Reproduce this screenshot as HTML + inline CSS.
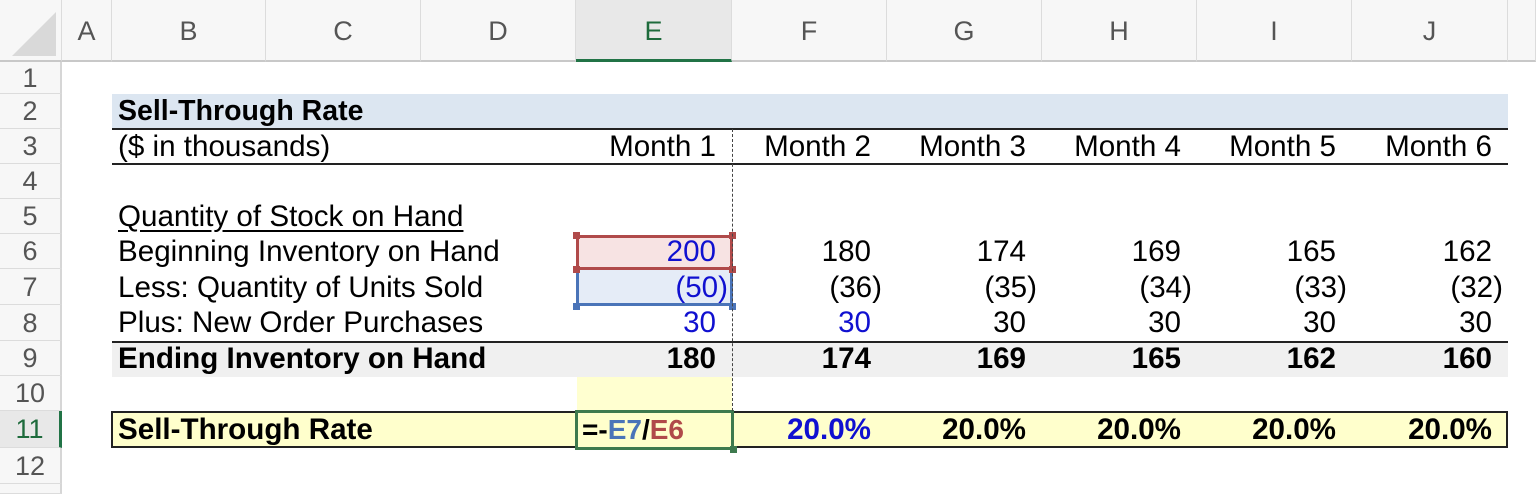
<!DOCTYPE html>
<html><head><meta charset="utf-8"><style>
*{margin:0;padding:0;box-sizing:border-box}
body{width:1536px;height:488px;overflow:hidden;background:#fff;position:relative;font-family:"Liberation Sans",Arial,sans-serif;color:#000}
.a{position:absolute}
.ch{position:absolute;top:0;height:62px;background:#f7f7f7;border-right:1px solid #dcdcdc;border-bottom:2px solid #c8c8c8;color:#555;font-size:27px;line-height:62px;text-align:center}
.rh{position:absolute;left:0;width:62px;background:#f7f7f7;border-right:2px solid #d6d6d6;border-bottom:1px solid #dcdcdc;color:#555;font-size:27px;text-align:center}
.t{position:absolute;font-size:29.6px;white-space:nowrap;line-height:35px}
.r{text-align:right}
.b{font-weight:bold}
.bl{color:#1010d0}
</style></head><body>
<div class="a" style="left:0;top:0;width:62px;height:62px;background:#f7f7f7;border-right:1px solid #dcdcdc;border-bottom:2px solid #c8c8c8"></div>
<svg class="a" style="left:8px;top:8px" width="50" height="50"><polygon points="48,4 48,48 4,48" fill="#d9d9d9"/></svg>
<div class="ch" style="left:62px;width:50px">A</div>
<div class="ch" style="left:112px;width:154px">B</div>
<div class="ch" style="left:266px;width:155px">C</div>
<div class="ch" style="left:421px;width:155px">D</div>
<div class="ch" style="left:576px;width:156px;color:#1e6b3c;background:#e8e8e8;border-bottom:3px solid #217346">E</div>
<div class="ch" style="left:732px;width:155px">F</div>
<div class="ch" style="left:887px;width:155px">G</div>
<div class="ch" style="left:1042px;width:155px">H</div>
<div class="ch" style="left:1197px;width:155px">I</div>
<div class="ch" style="left:1352px;width:156px">J</div>
<div class="ch" style="left:1508px;width:28px"></div>
<div class="rh" style="top:62px;height:32px;line-height:32px">1</div>
<div class="rh" style="top:94px;height:35px;line-height:35px">2</div>
<div class="rh" style="top:129px;height:35px;line-height:35px">3</div>
<div class="rh" style="top:164px;height:35px;line-height:35px">4</div>
<div class="rh" style="top:199px;height:35px;line-height:35px">5</div>
<div class="rh" style="top:234px;height:35px;line-height:35px">6</div>
<div class="rh" style="top:269px;height:36px;line-height:36px">7</div>
<div class="rh" style="top:305px;height:36px;line-height:36px">8</div>
<div class="rh" style="top:341px;height:35px;line-height:35px">9</div>
<div class="rh" style="top:376px;height:35px;line-height:35px">10</div>
<div class="rh" style="top:411px;height:37px;line-height:37px;color:#1e6b3c;background:#e8e8e8;border-right:3px solid #217346">11</div>
<div class="rh" style="top:448px;height:36px;line-height:36px">12</div>
<div class="rh" style="top:484px;height:10px"></div>

<div class="a" style="left:112px;top:94px;width:1396px;height:35px;background:#dce6f1"></div>
<div class="a" style="left:112px;top:128px;width:1396px;height:2px;background:#222"></div>
<div class="a" style="left:112px;top:163px;width:1396px;height:2px;background:#222"></div>
<div class="a" style="left:112px;top:341px;width:1396px;height:36px;background:#f0f0f0;border-top:2px solid #222"></div>
<div class="a" style="left:577px;top:377px;width:155px;height:34px;background:#ffffd0"></div>
<div class="a" style="left:111px;top:411px;width:1397px;height:37px;background:#ffffcc;border:2px solid #222"></div>
<div class="a" style="left:576px;top:235px;width:157px;height:35px;background:#f7e3e3;border:3px solid #b04a4a"></div>
<div class="a" style="left:576px;top:270px;width:157px;height:36px;background:#e5ecf7;border-left:3px solid #4a74b8;border-right:3px solid #4a74b8;border-bottom:3px solid #4a74b8"></div>
<div class="a" style="left:573px;top:232px;width:7px;height:7px;background:#b04a4a"></div>
<div class="a" style="left:729px;top:232px;width:7px;height:7px;background:#b04a4a"></div>
<div class="a" style="left:573px;top:266px;width:7px;height:7px;background:#b04a4a"></div>
<div class="a" style="left:729px;top:266px;width:7px;height:7px;background:#b04a4a"></div>
<div class="a" style="left:573px;top:303px;width:7px;height:7px;background:#4a74b8"></div>
<div class="a" style="left:729px;top:303px;width:7px;height:7px;background:#4a74b8"></div>
<div class="a" style="left:575px;top:410px;width:159px;height:40px;background:#ffffcc;border:3px solid #3e7a4e"></div>
<div class="a" style="left:730px;top:446px;width:7px;height:7px;background:#3e7a4e"></div>
<div class="a" style="left:732px;top:129px;width:0;height:282px;border-left:1px dashed #444"></div>

<div class="t b" style="left:118px;top:94px;font-size:28.5px">Sell-Through Rate</div>
<div class="t" style="left:118px;top:129px">($ in thousands)</div>
<div class="t r" style="left:576px;width:140px;top:129px">Month 1</div>
<div class="t r" style="left:732px;width:139px;top:129px">Month 2</div>
<div class="t r" style="left:887px;width:139px;top:129px">Month 3</div>
<div class="t r" style="left:1042px;width:139px;top:129px">Month 4</div>
<div class="t r" style="left:1197px;width:139px;top:129px">Month 5</div>
<div class="t r" style="left:1352px;width:140px;top:129px">Month 6</div>

<div class="t" style="left:118px;top:199px;text-decoration:underline;text-underline-offset:4px">Quantity of Stock on Hand</div>
<div class="t" style="left:118px;top:234px">Beginning Inventory on Hand</div>
<div class="t" style="left:118px;top:270px">Less: Quantity of Units Sold</div>
<div class="t" style="left:118px;top:305px">Plus: New Order Purchases</div>
<div class="t b" style="left:118px;top:341px">Ending Inventory on Hand</div>
<div class="t b" style="left:118px;top:411px;line-height:37px">Sell-Through Rate</div>

<div class="t r bl" style="left:576px;width:140px;top:234px">200</div>
<div class="t r" style="left:732px;width:139px;top:234px">180</div>
<div class="t r" style="left:887px;width:139px;top:234px">174</div>
<div class="t r" style="left:1042px;width:139px;top:234px">169</div>
<div class="t r" style="left:1197px;width:139px;top:234px">165</div>
<div class="t r" style="left:1352px;width:140px;top:234px">162</div>

<div class="t r bl" style="left:576px;width:152px;top:270px">(50)</div>
<div class="t r" style="left:732px;width:150px;top:270px">(36)</div>
<div class="t r" style="left:887px;width:150px;top:270px">(35)</div>
<div class="t r" style="left:1042px;width:150px;top:270px">(34)</div>
<div class="t r" style="left:1197px;width:150px;top:270px">(33)</div>
<div class="t r" style="left:1352px;width:151px;top:270px">(32)</div>

<div class="t r bl" style="left:576px;width:140px;top:305px">30</div>
<div class="t r bl" style="left:732px;width:139px;top:305px">30</div>
<div class="t r" style="left:887px;width:139px;top:305px">30</div>
<div class="t r" style="left:1042px;width:139px;top:305px">30</div>
<div class="t r" style="left:1197px;width:139px;top:305px">30</div>
<div class="t r" style="left:1352px;width:140px;top:305px">30</div>

<div class="t r b" style="left:576px;width:140px;top:341px">180</div>
<div class="t r b" style="left:732px;width:139px;top:341px">174</div>
<div class="t r b" style="left:887px;width:139px;top:341px">169</div>
<div class="t r b" style="left:1042px;width:139px;top:341px">165</div>
<div class="t r b" style="left:1197px;width:139px;top:341px">162</div>
<div class="t r b" style="left:1352px;width:140px;top:341px">160</div>

<div class="t b" style="left:582px;top:411px;line-height:37px;font-size:28px">=-<span style="color:#4a74b8">E7</span>/<span style="color:#b04a4a">E6</span></div>
<div class="t r b bl" style="left:732px;width:139px;top:411px;line-height:37px">20.0%</div>
<div class="t r b" style="left:887px;width:139px;top:411px;line-height:37px">20.0%</div>
<div class="t r b" style="left:1042px;width:139px;top:411px;line-height:37px">20.0%</div>
<div class="t r b" style="left:1197px;width:139px;top:411px;line-height:37px">20.0%</div>
<div class="t r b" style="left:1352px;width:140px;top:411px;line-height:37px">20.0%</div>
</body></html>
